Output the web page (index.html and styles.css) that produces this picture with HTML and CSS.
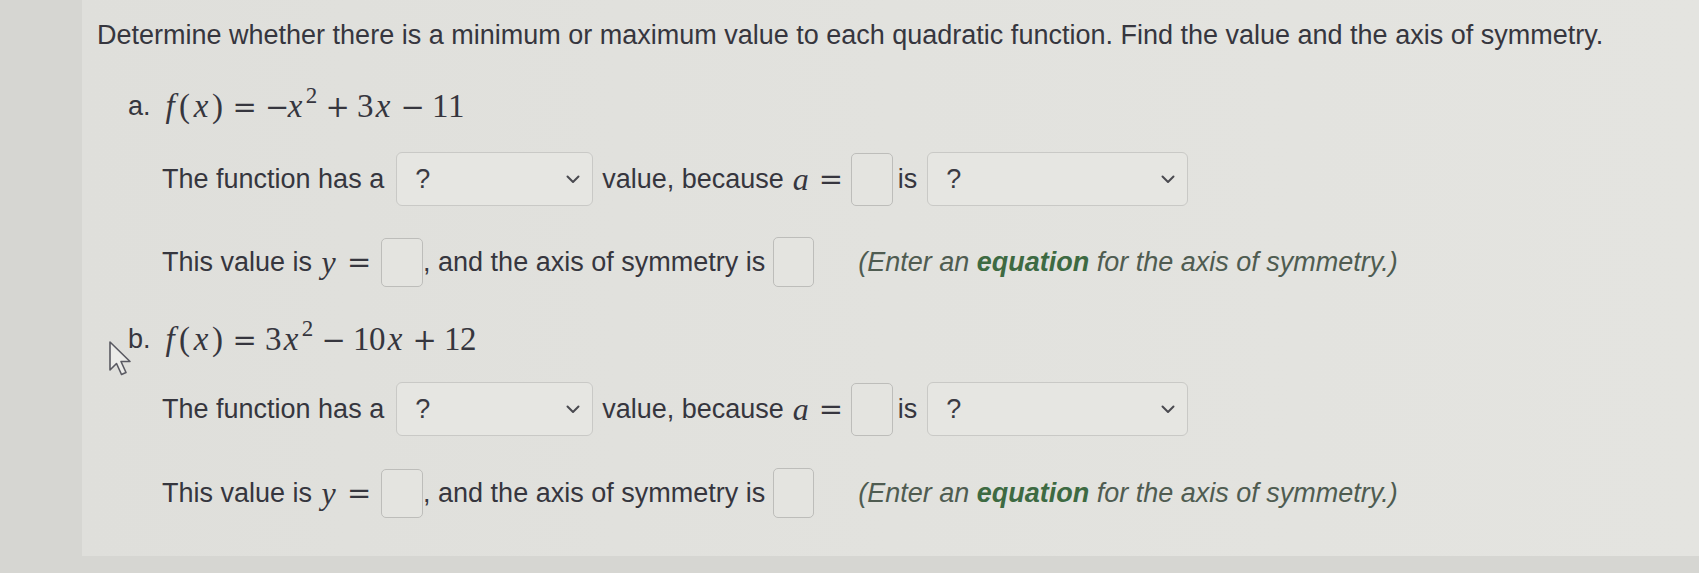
FILE: index.html
```html
<!DOCTYPE html>
<html>
<head>
<meta charset="utf-8">
<link rel="stylesheet" href="styles.css">
</head>
<body>
<div class="page">
  <div class="panel">
    <p class="heading">Determine whether there is a minimum or maximum value to each quadratic function. Find the value and the axis of symmetry.</p>

    <div class="part">
      <div class="part-title">
        <span class="label">a.</span>
        <span class="math"><span class="g g-f">f</span><span class="g g-p">(</span><span class="g g-x">x</span><span class="g g-p">)</span><span class="g g-op rel">=</span><span class="g g-op g-neg">−</span><span class="g g-x">x</span><span class="g g-sup">2</span><span class="g g-op bin">+</span><span class="g g-d">3</span><span class="g g-x">x</span><span class="g g-op bin">−</span><span class="g g-d">1</span><span class="g g-d">1</span></span>
      </div>
      <div class="row row-select">
        <span class="txt">The function has a</span>
        <div class="select sel-short"><span class="q">?</span><svg class="chev" width="14" height="9" viewBox="0 0 14 9"><polyline points="1.5,1.5 7,7 12.5,1.5" fill="none" stroke="#4a4a50" stroke-width="2" stroke-linecap="round" stroke-linejoin="round"/></svg></div>
        <span class="txt after-sel">value, because</span><span class="mvar">a</span><span class="meq">=</span>
        <div class="box box-a"></div>
        <span class="txt is">is</span>
        <div class="select sel-long"><span class="q">?</span><svg class="chev" width="14" height="9" viewBox="0 0 14 9"><polyline points="1.5,1.5 7,7 12.5,1.5" fill="none" stroke="#4a4a50" stroke-width="2" stroke-linecap="round" stroke-linejoin="round"/></svg></div>
      </div>
      <div class="row row-input">
        <span class="txt">This value is</span><span class="mvar">y</span><span class="meq">=</span>
        <div class="box box-y"></div>
        <span class="txt">, and the axis of symmetry is</span>
        <div class="box box-axis"></div>
        <span class="hint">(Enter an <b>equation</b> for the axis of symmetry.)</span>
      </div>
    </div>

    <div class="part part-b">
      <div class="part-title">
        <span class="label">b.</span>
        <span class="math"><span class="g g-f">f</span><span class="g g-p">(</span><span class="g g-x">x</span><span class="g g-p">)</span><span class="g g-op rel">=</span><span class="g g-d">3</span><span class="g g-x">x</span><span class="g g-sup">2</span><span class="g g-op bin">−</span><span class="g g-d">1</span><span class="g g-d">0</span><span class="g g-x">x</span><span class="g g-op bin">+</span><span class="g g-d">1</span><span class="g g-d">2</span></span>
      </div>
      <div class="row row-select">
        <span class="txt">The function has a</span>
        <div class="select sel-short"><span class="q">?</span><svg class="chev" width="14" height="9" viewBox="0 0 14 9"><polyline points="1.5,1.5 7,7 12.5,1.5" fill="none" stroke="#4a4a50" stroke-width="2" stroke-linecap="round" stroke-linejoin="round"/></svg></div>
        <span class="txt after-sel">value, because</span><span class="mvar">a</span><span class="meq">=</span>
        <div class="box box-a"></div>
        <span class="txt is">is</span>
        <div class="select sel-long"><span class="q">?</span><svg class="chev" width="14" height="9" viewBox="0 0 14 9"><polyline points="1.5,1.5 7,7 12.5,1.5" fill="none" stroke="#4a4a50" stroke-width="2" stroke-linecap="round" stroke-linejoin="round"/></svg></div>
      </div>
      <div class="row row-input">
        <span class="txt">This value is</span><span class="mvar">y</span><span class="meq">=</span>
        <div class="box box-y"></div>
        <span class="txt">, and the axis of symmetry is</span>
        <div class="box box-axis"></div>
        <span class="hint">(Enter an <b>equation</b> for the axis of symmetry.)</span>
      </div>
    </div>

    <svg class="cursor" width="28" height="40" viewBox="0 0 28 40"><path d="M2 2 L2 30 L8.5 23.5 L13.5 34.5 L18 32.5 L13 21.5 L22 21.5 Z" fill="#ecece9" stroke="#5a5a62" stroke-width="1.6" stroke-linejoin="round"/></svg>
  </div>
</div>
</body>
</html>
```

FILE: styles.css
```css
html, body {
  margin: 0;
  padding: 0;
}
body {
  background: #d6d6d2;
  font-family: "Liberation Sans", Arial, sans-serif;
  color: #36363e;
}
.page {
  width: 1699px;
  height: 573px;
  overflow: hidden;
}
.panel {
  position: relative;
  margin-left: 82px;
  height: 556px;
  background: linear-gradient(90deg, #dfdfdb 0%, #e2e2de 50%, #e4e4e0 100%);
  padding: 19px 0 0 15px;
  box-sizing: border-box;
}
.heading {
  margin: 0;
  font-size: 27px;
  line-height: 32px;
  white-space: nowrap;
}
.part {
  margin-top: 35px;
}
.part-b {
  margin-top: 32px;
}
.part-title {
  display: flex;
  align-items: center;
  height: 40px;
  margin-left: 31px;
}
.label {
  font-size: 27px;
  width: 34px;
}
.math {
  font-family: "Liberation Serif", "Times New Roman", serif;
  font-size: 33px;
  display: flex;
  align-items: baseline;
  white-space: nowrap;
}
.g {
  display: inline-block;
  text-align: center;
}
.g-f {
  width: 16px;
  font-style: italic;
}
.g-p {
  width: 13px;
}
.g-x {
  width: 20px;
  font-style: italic;
}
.g-d {
  width: 16px;
}
.g-op {
  width: 24px;
  font-family: "DejaVu Serif", serif;
  font-size: 29px;
  font-weight: 300;
}
.g-neg {
  width: 20px;
}
.rel {
  margin: 0 8.5px;
}
.bin {
  margin: 0 7.5px;
}
.g-sup {
  width: 13px;
  font-size: 23px;
  position: relative;
  top: -14px;
}
.row {
  display: flex;
  align-items: center;
  margin-left: 65px;
  white-space: nowrap;
}
.row-select {
  height: 54px;
  margin-top: 26px;
}
.part-b .row-select {
  margin-top: 23px;
}
.row-input {
  height: 50px;
  margin-top: 31px;
}
.part-b .row-input {
  margin-top: 32px;
}
.txt {
  font-size: 27px;
}
.mvar {
  font-family: "Liberation Serif", "Times New Roman", serif;
  font-style: italic;
  font-size: 32px;
  width: 15px;
  text-align: center;
  margin-left: 9px;
}
.meq {
  font-family: "DejaVu Serif", serif;
  font-size: 29px;
  width: 24px;
  text-align: center;
  margin-left: 11px;
}
.select {
  display: flex;
  align-items: center;
  justify-content: space-between;
  box-sizing: border-box;
  height: 54px;
  border: 1.5px solid #c9c9c6;
  border-radius: 6px;
  background: #e6e6e2;
  padding: 0 12px 0 18px;
}
.sel-short {
  width: 197px;
  margin-left: 12px;
}
.sel-long {
  width: 261px;
  margin-left: 10px;
}
.q {
  font-size: 27px;
  color: #3a3a42;
}
.after-sel {
  margin-left: 9px;
}
.box {
  box-sizing: border-box;
  border: 1.5px solid #bdbdba;
  border-radius: 5px;
  background: #e4e4e0;
}
.box-a {
  width: 42px;
  height: 53px;
  margin-left: 8px;
}
.is {
  margin-left: 5px;
}
.box-y {
  width: 42px;
  height: 49px;
  margin-left: 10px;
}
.box-axis {
  width: 41px;
  height: 50px;
  margin-left: 8px;
}
.hint {
  font-size: 27px;
  font-style: italic;
  color: #4f5c51;
  margin-left: 44px;
}
.hint b {
  color: #3d6a42;
  font-weight: bold;
}
.cursor {
  position: absolute;
  left: 26px;
  top: 340px;
}
```
